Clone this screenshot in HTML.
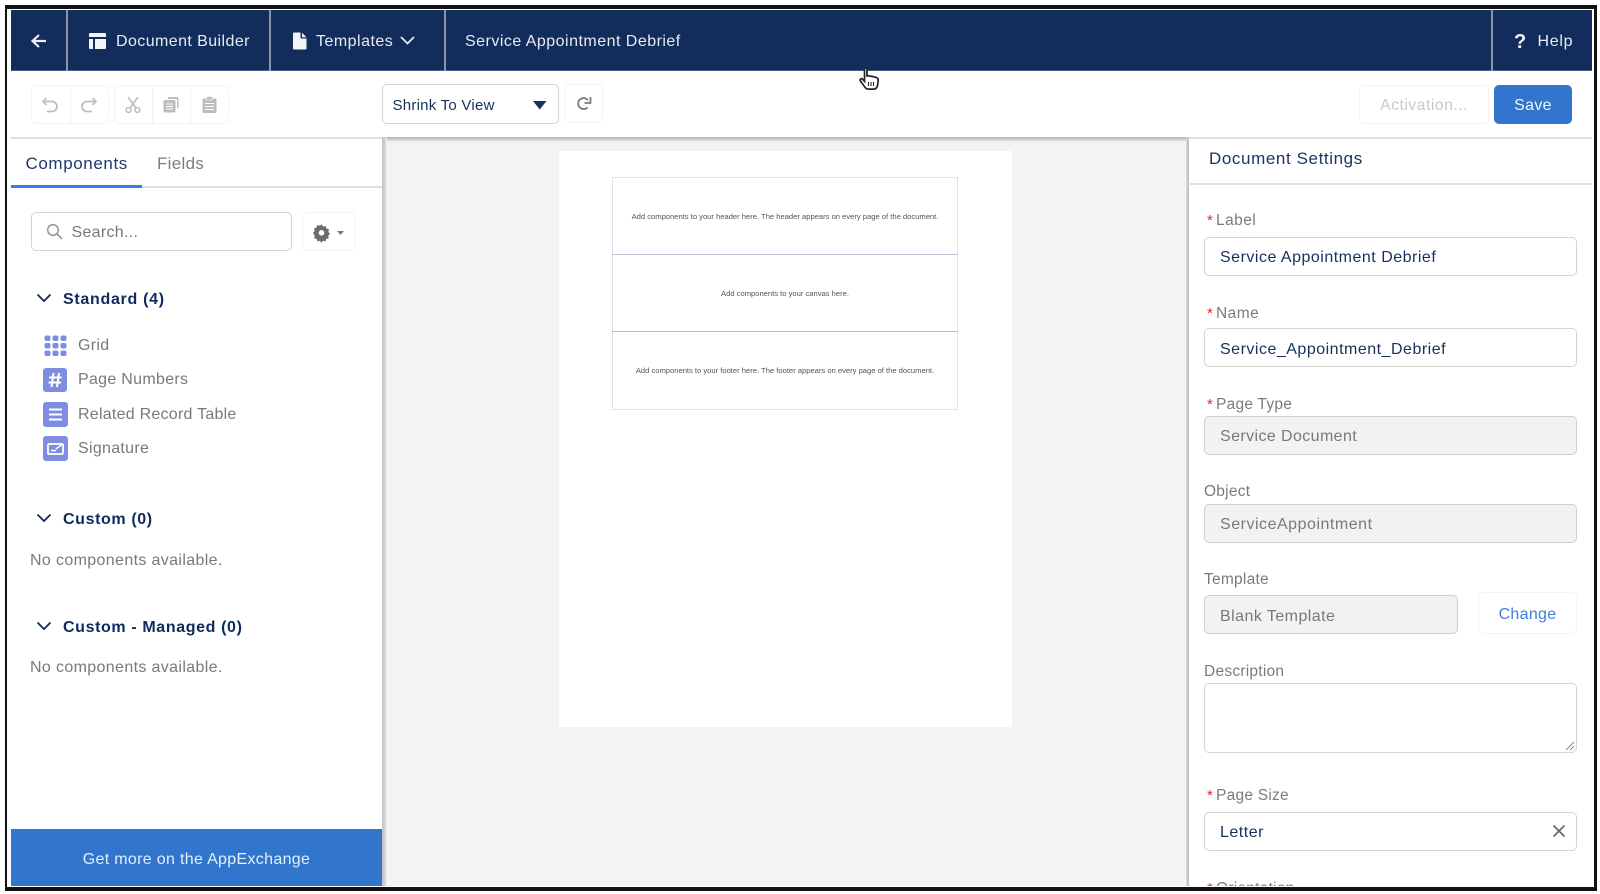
<!DOCTYPE html>
<html><head><meta charset="utf-8"><style>
*{box-sizing:border-box}
html,body{margin:0;padding:0;background:#fff}
body{width:1600px;height:894px;overflow:hidden;position:relative;font-family:"Liberation Sans",sans-serif}
#r{position:absolute;left:0;top:0;width:1600px;height:894px;filter:blur(.35px);overflow:hidden}
.a{position:absolute}
.t{position:absolute;white-space:nowrap;line-height:20px;font-size:16px;letter-spacing:.3px;margin-top:1px}
.nav{color:#e8ebf1;letter-spacing:.48px}
.lab{color:#7b7b7b;font-size:15.5px;letter-spacing:.25px}
.in{position:absolute;background:#fff;border:1.5px solid #d4d4d4;border-radius:5px}
.dis{background:#f2f2f2;border-color:#cfcfcf}
.v{color:#16325c;letter-spacing:.5px}
.g{color:#797979}
.d{letter-spacing:.45px}
.h{color:#0f2a5e;font-weight:bold;letter-spacing:.62px}
.req{position:absolute;color:#e5242a;font-size:15px;line-height:20px;margin-top:1px}
.btn{position:absolute;background:#fff;border:1.5px solid #f3f3f3;border-radius:5px}
svg{position:absolute;overflow:visible}
.ic{position:absolute;background:#7f8de1;border-radius:3px}
.cv{position:absolute;left:612px;width:346px;text-align:center;font-size:7.6px;line-height:10px;color:#555;white-space:nowrap;margin-top:1px}
</style></head><body><div id="r">
<!-- outer frame -->
<div class="a" style="left:5px;top:5px;width:1592px;height:886px;border:solid #111;border-width:4px 3px 4px 2px"></div>
<!-- nav -->
<div class="a" style="left:10.500px;top:10px;width:1581.500px;height:61px;background:#122c5c;border-bottom:1px solid #4a5a80"></div>
<div class="a" style="left:66px;top:10px;width:2px;height:61px;background:#8a94a8"></div>
<div class="a" style="left:269px;top:10px;width:2px;height:61px;background:#8a94a8"></div>
<div class="a" style="left:444px;top:10px;width:2px;height:61px;background:#8a94a8"></div>
<div class="a" style="left:1490.500px;top:10px;width:2px;height:61px;background:#8a94a8"></div>
<svg style="left:30px;top:32px" width="18" height="18" viewBox="0 0 18 18"><path d="M16 9H3M9 3L2.500 9 9 15" fill="none" stroke="#eef0f4" stroke-width="2.200"/></svg>
<svg style="left:88px;top:32px" width="19" height="18" viewBox="0 0 19 18"><path d="M1 2a1 1 0 0 1 1-1h15a1 1 0 0 1 1 1v3H1zM1 7h4v10H2a1 1 0 0 1-1-1zM7 7h11v9a1 1 0 0 1-1 1H7z" fill="#f2f3f6"/></svg>
<div class="t nav" style="left:116px;top:31px;letter-spacing:.42px">Document Builder</div>
<svg style="left:292px;top:32px" width="15" height="18" viewBox="0 0 15 18"><path d="M1 1.500A1 1 0 0 1 2 .5h6.500v5a1 1 0 0 0 1 1h5v10a1 1 0 0 1-1 1H2a1 1 0 0 1-1-1zM10 .8l4.500 4.500H10z" fill="#f2f3f6"/></svg>
<div class="t nav" style="left:316px;top:31px">Templates</div>
<svg style="left:400px;top:36px" width="15" height="9" viewBox="0 0 15 9"><path d="M1 1l6.500 6.500L14 1" fill="none" stroke="#e8ebf1" stroke-width="1.800"/></svg>
<div class="t nav" style="left:465px;top:31px">Service Appointment Debrief</div>
<div class="a" style="left:1514px;top:30px;color:#f2f3f6;font-weight:bold;font-size:20px;line-height:24px">?</div>
<div class="t nav" style="left:1537.500px;top:31px;letter-spacing:.7px">Help</div>
<!-- toolbar -->
<div class="btn" style="left:31px;top:85px;width:78px;height:39px"></div>
<div class="a" style="left:70px;top:85px;width:1px;height:39px;background:#f1f1f1"></div>
<div class="btn" style="left:114px;top:85px;width:115px;height:39px"></div>
<div class="a" style="left:152px;top:85px;width:1px;height:39px;background:#f1f1f1"></div>
<div class="a" style="left:190px;top:85px;width:1px;height:39px;background:#f1f1f1"></div>
<svg style="left:41px;top:96px" width="18" height="18" viewBox="0 0 18 18"><path d="M5.500 2L2 5.500 5.500 9M2.500 5.500H11a5 5 0 0 1 0 10H6" fill="none" stroke="#bdbdbd" stroke-width="1.700"/></svg>
<svg style="left:80px;top:96px" width="18" height="18" viewBox="0 0 18 18"><path d="M12.500 2L16 5.500 12.500 9M15.500 5.500H7a5 5 0 0 0 0 10h5" fill="none" stroke="#bdbdbd" stroke-width="1.700"/></svg>
<svg style="left:125px;top:96px" width="16" height="18" viewBox="0 0 16 18"><path d="M3 1l8 11M13 1L5 12" fill="none" stroke="#bdbdbd" stroke-width="1.600"/><circle cx="3.500" cy="14" r="2.400" fill="none" stroke="#bdbdbd" stroke-width="1.500"/><circle cx="12.500" cy="14" r="2.400" fill="none" stroke="#bdbdbd" stroke-width="1.500"/></svg>
<svg style="left:163px;top:97px" width="16" height="16" viewBox="0 0 16 16"><path d="M5 0h9a1.500 1.500 0 0 1 1.500 1.500V11H14V2H5zM2 3h9a1.500 1.500 0 0 1 1.500 1.500V14a1.500 1.500 0 0 1-1.500 1.500H2A1.500 1.500 0 0 1 .5 14V4.500A1.500 1.500 0 0 1 2 3z" fill="#bdbdbd"/><path d="M3 7h7M3 9.500h7M3 12h7" stroke="#fff" stroke-width="1"/></svg>
<svg style="left:202px;top:96px" width="15" height="18" viewBox="0 0 15 18"><path d="M1.500 2.500h12a1 1 0 0 1 1 1V16a1 1 0 0 1-1 1h-12a1 1 0 0 1-1-1V3.500a1 1 0 0 1 1-1z" fill="#bdbdbd"/><rect x="4.500" y=".5" width="6" height="3.500" rx=".7" fill="#bdbdbd" stroke="#fff" stroke-width=".6"/><path d="M3 7.500h9M3 10.500h9M3 13.500h9" stroke="#fff" stroke-width="1"/></svg>
<div class="in" style="left:382px;top:84px;width:177px;height:40px"></div>
<div class="t" style="left:392.500px;top:95px;font-size:15px;color:#16325c;letter-spacing:.25px">Shrink To View</div>
<svg style="left:533px;top:101px" width="14" height="9" viewBox="0 0 14 9"><path d="M0 0h13.500L6.750 8.500z" fill="#16325c"/></svg>
<div class="btn" style="left:564px;top:84px;width:39px;height:39px"></div>
<svg style="left:575px;top:96px" width="17" height="17" viewBox="0 0 17 17"><path d="M12.500 11.500A5.500 5.500 0 1 1 13 4.200M15.500 1v6h-6" fill="none" stroke="#7b7b7b" stroke-width="1.800"/></svg>
<div class="btn" style="left:1359px;top:85px;width:130px;height:39px"></div>
<div class="t" style="left:1380px;top:95px;color:#c9c9c9;letter-spacing:.4px">Activation...</div>
<div class="a" style="left:1494px;top:85px;width:78px;height:39px;background:#3275cd;border-radius:5px"></div>
<div class="t" style="left:1494px;top:95px;width:78px;text-align:center;color:#f2f5fa;font-weight:500">Save</div>
<div class="a" style="left:11px;top:137px;width:1581px;height:2px;background:#dfdfdf"></div>
<!-- canvas -->
<div class="a" style="left:382px;top:137px;width:807px;height:749px;background:#f3f3f3"></div>
<div class="a" style="left:382px;top:137px;width:807px;height:5px;background:linear-gradient(#b4b4b4,#c8c8c8 40%,#f3f3f3)"></div>
<div class="a" style="left:382px;top:137px;width:5px;height:749px;background:linear-gradient(90deg,#c4c4c4,#cdcdcd 50%,#f3f3f3)"></div>
<div class="a" style="left:1185.500px;top:137px;width:3.500px;height:749px;background:linear-gradient(90deg,#e4e4e4,#c0c0c0 60%,#c4c4c4)"></div>
<div class="a" style="left:559px;top:151px;width:452.500px;height:576px;background:#fff"></div>
<div class="a" style="left:612px;top:177px;width:346px;height:232.500px;border:1px solid #dfe2ea"></div>
<div class="a" style="left:612px;top:254px;width:346px;height:1px;background:#bcc2d4"></div>
<div class="a" style="left:612px;top:331px;width:346px;height:1px;background:#b4bacd"></div>
<div class="cv" style="top:211px">Add components to your header here. The header appears on every page of the document.</div>
<div class="cv" style="top:288px">Add components to your canvas here.</div>
<div class="cv" style="top:365px">Add components to your footer here. The footer appears on every page of the document.</div>
<!-- left panel -->
<div class="t" style="left:25.500px;top:153px;font-size:17px;color:#1f3a6e;letter-spacing:.6px">Components</div>
<div class="t" style="left:157px;top:153px;font-size:17px;color:#7d7d7d">Fields</div>
<div class="a" style="left:11px;top:186px;width:371px;height:2px;background:#dfdfdf"></div>
<div class="a" style="left:11px;top:184.500px;width:131px;height:3px;background:#2f80ed"></div>
<div class="in" style="left:30.500px;top:212px;width:261px;height:38.500px"></div>
<svg style="left:46px;top:223px" width="17" height="17" viewBox="0 0 17 17"><circle cx="7" cy="7" r="5.300" fill="none" stroke="#9a9a9a" stroke-width="1.600"/><path d="M11 11l5 5" stroke="#9a9a9a" stroke-width="1.800"/></svg>
<div class="t g" style="left:71.500px;top:222px">Search...</div>
<div class="btn" style="left:302px;top:212px;width:54px;height:38.500px"></div>
<svg style="left:313px;top:224px" width="17" height="17" viewBox="0 0 17 17"><path d="M8.500.3l1.700 2.300 2.500-.6.700 2.500 2.600.9-.7 2.500 1.700 2-1.800 1.900.6 2.500-2.600.7-.8 2.500-2.400-.7-1.500 1.900-1.600-1.900-2.400.7-.8-2.500-2.600-.7.6-2.500L0 8.900l1.700-2-.7-2.500 2.600-.9.700-2.500 2.500.6z" fill="#6c6c6c"/><circle cx="8.500" cy="8.800" r="2.800" fill="#fff"/></svg>
<svg style="left:337px;top:231px" width="7" height="4" viewBox="0 0 7 4"><path d="M0 0h7L3.500 4z" fill="#777"/></svg>

<svg style="left:36px;top:293px" width="16" height="10" viewBox="0 0 16 10"><path d="M1.500 1.500L8 8l6.500-6.500" fill="none" stroke="#16325c" stroke-width="1.900"/></svg>
<div class="t h" style="left:63px;top:289px;letter-spacing:.7px">Standard (4)</div>
<svg style="left:44px;top:335px" width="23" height="21" viewBox="0 0 23 21" fill="#7f8de1"><rect x=".5" y=".5" width="6" height="5.500" rx="2"/><rect x="8.500" y=".5" width="6" height="5.500" rx="2"/><rect x="16.500" y=".5" width="6" height="5.500" rx="2"/><rect x=".5" y="8" width="6" height="5.500" rx="2"/><rect x="8.500" y="8" width="6" height="5.500" rx="2"/><rect x="16.500" y="8" width="6" height="5.500" rx="2"/><rect x=".5" y="15.500" width="6" height="5.500" rx="2"/><rect x="8.500" y="15.500" width="6" height="5.500" rx="2"/><rect x="16.500" y="15.500" width="6" height="5.500" rx="2"/></svg>
<div class="t g" style="left:78px;top:335px">Grid</div>
<div class="ic" style="left:43px;top:368px;width:24px;height:24px"></div>
<svg style="left:43px;top:368px" width="24" height="24" viewBox="0 0 24 24"><path d="M10.500 5L8.500 19M16 5l-2 14M6 9.500H18.500M5.500 14.500H18" fill="none" stroke="#fff" stroke-width="2"/></svg>
<div class="t g" style="left:78px;top:369px">Page Numbers</div>
<div class="ic" style="left:43px;top:402px;width:25px;height:25px"></div>
<svg style="left:43px;top:402px" width="25" height="25" viewBox="0 0 25 25"><path d="M6 7.500h13M6 12.500h13M6 17.500h13" stroke="#fff" stroke-width="2"/></svg>
<div class="t g" style="left:78px;top:404px;letter-spacing:.25px">Related Record Table</div>
<div class="ic" style="left:43px;top:436px;width:25px;height:25px"></div>
<svg style="left:43px;top:436px" width="25" height="25" viewBox="0 0 25 25"><rect x="5" y="8" width="15" height="10" rx="1" fill="none" stroke="#fff" stroke-width="1.800"/><path d="M8 14.500h5M13 13l6-4.500" stroke="#fff" stroke-width="1.500"/></svg>
<div class="t g" style="left:78px;top:437.500px">Signature</div>

<svg style="left:36px;top:513px" width="16" height="10" viewBox="0 0 16 10"><path d="M1.500 1.500L8 8l6.500-6.500" fill="none" stroke="#16325c" stroke-width="1.900"/></svg>
<div class="t h" style="left:63px;top:509px">Custom (0)</div>
<div class="t g" style="left:30px;top:550px;letter-spacing:.36px">No components available.</div>
<svg style="left:36px;top:621px" width="16" height="10" viewBox="0 0 16 10"><path d="M1.500 1.500L8 8l6.500-6.500" fill="none" stroke="#16325c" stroke-width="1.900"/></svg>
<div class="t h" style="left:63px;top:616.500px">Custom - Managed (0)</div>
<div class="t g" style="left:30px;top:657px;letter-spacing:.36px">No components available.</div>
<div class="a" style="left:11px;top:829px;width:371px;height:57px;background:#3275cd"></div>
<div class="t" style="left:11px;top:849px;width:371px;text-align:center;color:#e6edf8;letter-spacing:.32px">Get more on the AppExchange</div>
<!-- right panel -->
<div class="t" style="left:1209px;top:148px;font-size:17px;color:#1b3563;letter-spacing:.6px">Document Settings</div>
<div class="a" style="left:1190px;top:183px;width:402px;height:2px;background:#dfdfdf"></div>

<div class="req" style="left:1207px;top:210px">*</div><div class="t lab" style="left:1216px;top:210px;letter-spacing:.45px">Label</div>
<div class="in" style="left:1204px;top:237px;width:373px;height:39px"></div>
<div class="t v" style="left:1220px;top:247px">Service Appointment Debrief</div>

<div class="req" style="left:1207px;top:303px">*</div><div class="t lab" style="left:1216px;top:303px;letter-spacing:.45px">Name</div>
<div class="in" style="left:1204px;top:328px;width:373px;height:39px"></div>
<div class="t v" style="left:1220px;top:339px">Service_Appointment_Debrief</div>

<div class="req" style="left:1207px;top:394px">*</div><div class="t lab" style="left:1216px;top:394px">Page Type</div>
<div class="in dis" style="left:1204px;top:416px;width:373px;height:39px"></div>
<div class="t g d" style="left:1220px;top:426px;letter-spacing:.4px">Service Document</div>

<div class="t lab" style="left:1204px;top:481px">Object</div>
<div class="in dis" style="left:1204px;top:504px;width:373px;height:39px"></div>
<div class="t g d" style="left:1220px;top:514px;letter-spacing:.52px">ServiceAppointment</div>

<div class="t lab" style="left:1204px;top:569px">Template</div>
<div class="in dis" style="left:1204px;top:595px;width:254px;height:39px"></div>
<div class="t g d" style="left:1220px;top:606px">Blank Template</div>
<div class="btn" style="left:1478px;top:592px;width:99px;height:42px"></div>
<div class="t" style="left:1478px;top:604px;width:99px;text-align:center;color:#3f7fd6">Change</div>

<div class="t lab" style="left:1204px;top:661px">Description</div>
<div class="in" style="left:1204px;top:683px;width:373px;height:70px"></div>
<svg style="left:1565px;top:741px" width="10" height="10" viewBox="0 0 10 10"><path d="M1 9l8-8M5 9l4-4" stroke="#888" stroke-width="1"/></svg>

<div class="req" style="left:1207px;top:785px">*</div><div class="t lab" style="left:1216px;top:785px">Page Size</div>
<div class="in" style="left:1204px;top:812px;width:373px;height:39px"></div>
<div class="t v" style="left:1220px;top:822px">Letter</div>
<svg style="left:1552px;top:824px" width="14" height="14" viewBox="0 0 14 14"><path d="M1.500 1.500l11 11M12.500 1.500l-11 11" stroke="#6b6b6b" stroke-width="1.800"/></svg>
<div class="a" style="left:1190px;top:872px;width:402px;height:14px;overflow:hidden">
<div class="req" style="left:17px;top:6px">*</div><div class="t lab" style="left:26px;top:6px">Orientation</div></div>
<!-- hand cursor -->
<svg style="left:859px;top:67px" width="21" height="24" viewBox="0 0 21 24"><path d="M5.500 2.200c0-1.700 2.500-1.700 2.500 0V9l1.200-.2 4.800.8c2.800.4 5.200 1.300 5.200 3.300l-.5 4.600c-.2 2.400-1.600 4.600-3.800 4.600H9.400c-1.800 0-2.800-.8-3.700-2.300L1.400 14c-.9-1.700 1.100-3.100 2.300-1.700l1.800 2z" fill="#fff" stroke="#222" stroke-width="1.700"/><path d="M9.500 15v4M12 15v4M14.500 15v4" stroke="#222" stroke-width="1.100"/></svg>
</div></body></html>
